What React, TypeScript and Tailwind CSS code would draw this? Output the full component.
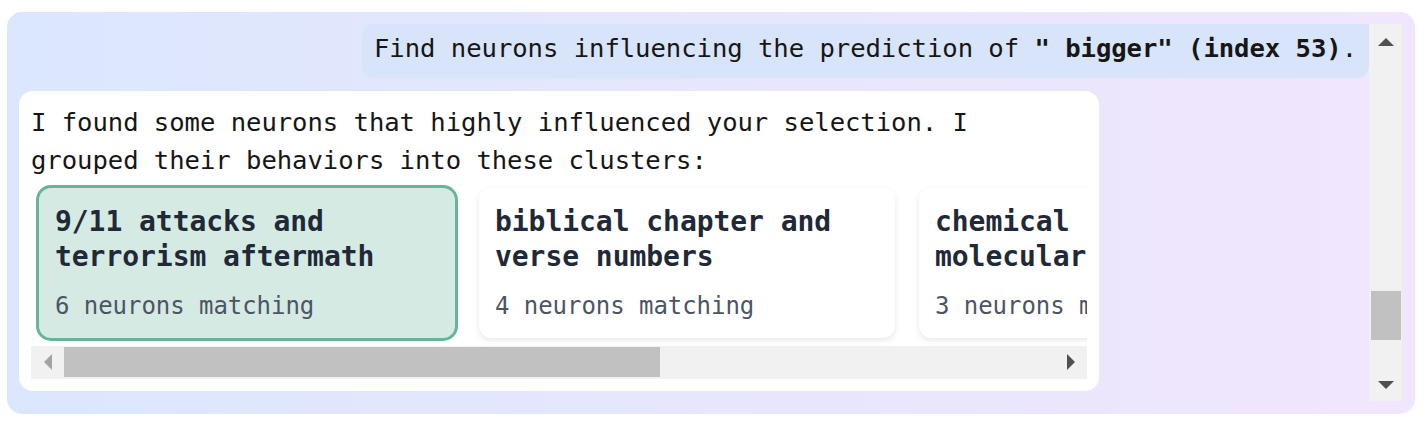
import React from "react";

const mono = { fontFamily: '"DejaVu Sans Mono", "Liberation Mono", monospace' };

function Card({
  title,
  count,
  selected,
}: {
  title: React.ReactNode;
  count: string;
  selected?: boolean;
}) {
  return (
    <div
      className={
        "flex h-[150px] w-[416px] shrink-0 flex-col rounded-[12px] px-[16px] pt-[16px] " +
        (selected
          ? "bg-[#d5eae2] ring-[3px] ring-[#69b39a]"
          : "bg-white shadow-[0_2px_6px_rgba(0,0,0,0.10)]")
      }
    >
      <div className="whitespace-nowrap text-[28px] font-bold leading-[35px] tracking-[-0.05px] text-[#1f2937]">
        {title}
      </div>
      <div className="mt-[16px] whitespace-nowrap text-[24px] leading-[32px] tracking-[-0.05px] text-[#4b5563]">
        {count}
      </div>
    </div>
  );
}

export default function App() {
  return (
    <div className="h-[421px] w-[1425px] bg-white pl-[7px] pt-[12px]" style={mono}>
      <div className="flex h-[402px] w-[1408px] rounded-[15px] bg-linear-to-r from-[#dbe7fd] to-[#f1e6fd] pb-[13px] pl-[12px] pr-[13px] pt-[12px]">
        {/* scroll viewport */}
        <div className="flex h-[377px] w-[1350px] flex-col overflow-hidden">
          <div className="flex justify-end">
            <div className="rounded-[12px] rounded-tr-none bg-[#d8e4fa] px-[12px] pb-[11px] pt-[5px] text-[25.6px] leading-[38.4px] tracking-[-0.05px] text-[#161616]">
              Find neurons influencing the prediction of{" "}
              <span className="font-bold">" bigger" (index 53)</span>.
            </div>
          </div>
          <div className="mt-[12.6px] flex">
            <div className="w-[1080px] rounded-[14px] bg-white p-[12px]">
              <p className="text-[25.6px] leading-[38.4px] tracking-[-0.05px] text-[#161616]">
                I found some neurons that highly influenced your selection. I grouped their
                behaviors into these clusters:
              </p>
              <div className="w-[1056px]">
                <div className="overflow-hidden">
                  <div className="flex gap-[24px] p-[8px]">
                    <Card
                      selected
                      title={
                        <>
                          9/11 attacks and
                          <br />
                          terrorism aftermath
                        </>
                      }
                      count="6 neurons matching"
                    />
                    <Card
                      title={
                        <>
                          biblical chapter and
                          <br />
                          verse numbers
                        </>
                      }
                      count="4 neurons matching"
                    />
                    <Card
                      title={
                        <>
                          chemical
                          <br />
                          molecular formulas
                        </>
                      }
                      count="3 neurons matching"
                    />
                  </div>
                </div>
                {/* horizontal scrollbar */}
                <div className="flex h-[33px] bg-[#f1f1f1]">
                  <div className="flex w-[33px] items-center justify-center">
                    <svg width="8" height="16" viewBox="0 0 8 16">
                      <polygon points="8,0 8,16 0,8" fill="#a3a3a3" />
                    </svg>
                  </div>
                  <div className="flex flex-1 items-center">
                    <div className="h-[30px] w-[596px] bg-[#c1c1c1]" />
                  </div>
                  <div className="flex w-[33px] items-center justify-center">
                    <svg width="8" height="16" viewBox="0 0 8 16">
                      <polygon points="0,0 8,8 0,16" fill="#505050" />
                    </svg>
                  </div>
                </div>
              </div>
            </div>
          </div>
        </div>
        {/* vertical scrollbar */}
        <div className="flex h-[377px] w-[33px] flex-col bg-[#f1f1f1]">
          <div className="flex h-[33px] items-center justify-center pt-[3px]">
            <svg width="16" height="8" viewBox="0 0 16 8">
              <polygon points="8,0 16,8 0,8" fill="#505050" />
            </svg>
          </div>
          <div className="flex flex-1 justify-center">
            <div className="mt-[234px] h-[49px] w-[30px] bg-[#c1c1c1]" />
          </div>
          <div className="flex h-[33px] items-center justify-center">
            <svg width="16" height="8" viewBox="0 0 16 8">
              <polygon points="0,0 16,0 8,8" fill="#505050" />
            </svg>
          </div>
        </div>
      </div>
    </div>
  );
}
